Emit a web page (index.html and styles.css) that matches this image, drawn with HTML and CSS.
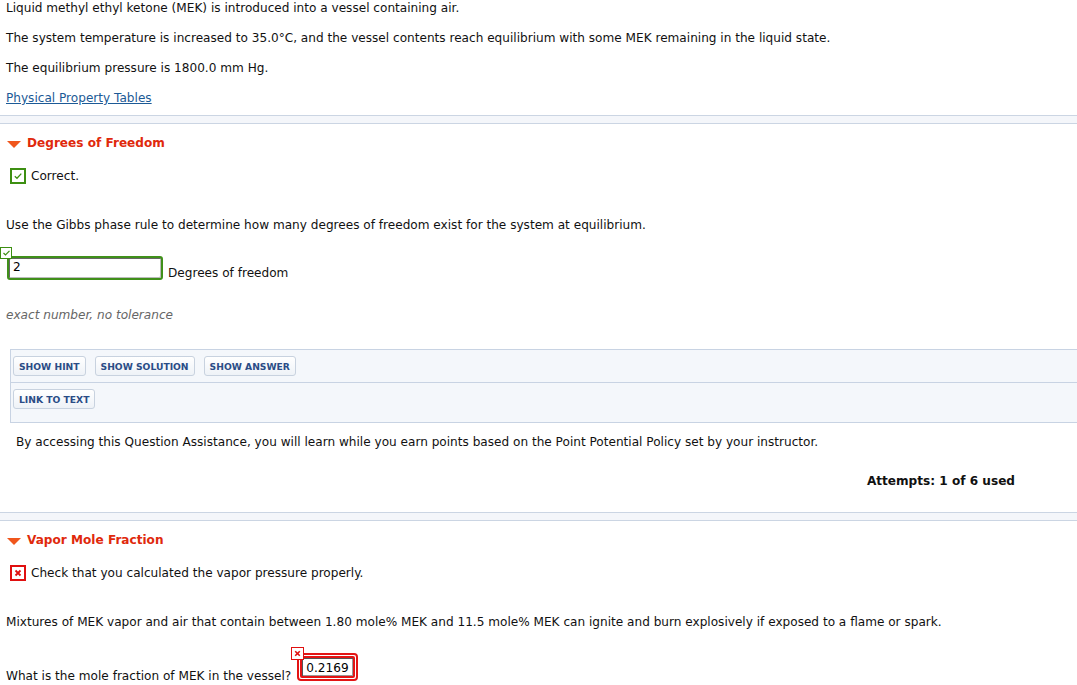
FILE: index.html
```html
<!DOCTYPE html>
<html>
<head>
<meta charset="utf-8">
<link rel="stylesheet" href="styles.css">
</head>
<body>
<div class="page">
  <p class="line">Liquid methyl ethyl ketone (MEK) is introduced into a vessel containing air.</p>
  <p class="line">The system temperature is increased to 35.0°C, and the vessel contents reach equilibrium with some MEK remaining in the liquid state.</p>
  <p class="line">The equilibrium pressure is 1800.0 mm Hg.</p>
  <p class="line"><a class="link" href="#">Physical Property Tables</a></p>

  <div class="sep sep1"></div>

  <div class="part-head"><span class="tri"></span>Degrees of Freedom</div>
  <div class="feedback fb1">
    <span class="fbox ok"><svg width="10" height="10" viewBox="0 0 10 10"><path d="M1.8 5.2 L4 7.3 L8.3 2.6" fill="none" stroke="#3d8f12" stroke-width="1.3"/></svg></span>
    <span>Correct.</span>
  </div>

  <p class="line q1">Use the Gibbs phase rule to determine how many degrees of freedom exist for the system at equilibrium.</p>

  <div class="answer-row a1">
    <span class="input-wrap">
      <span class="badge ok"><svg width="9" height="8" viewBox="0 0 9 8"><path d="M1.5 4 L3.5 6 L7.5 1.8" fill="none" stroke="#3d8f12" stroke-width="1.2"/></svg></span>
      <span class="input green">2</span>
    </span>
    <span class="unit">Degrees of freedom</span>
  </div>

  <p class="line note">exact number, no tolerance</p>

  <div class="assist">
    <div class="assist-row r1">
      <span class="btn">SHOW HINT</span>
      <span class="btn">SHOW SOLUTION</span>
      <span class="btn">SHOW ANSWER</span>
    </div>
    <div class="assist-row r2">
      <span class="btn">LINK TO TEXT</span>
    </div>
  </div>

  <p class="line policy">By accessing this Question Assistance, you will learn while you earn points based on the Point Potential Policy set by your instructor.</p>

  <div class="attempts">Attempts: 1 of 6 used</div>

  <div class="sep sep2"></div>

  <div class="part-head"><span class="tri"></span>Vapor Mole Fraction</div>
  <div class="feedback fb1">
    <span class="fbox bad"><svg width="10" height="10" viewBox="0 0 10 10"><path d="M2.5 2.5 L7.5 7.5 M7.5 2.5 L2.5 7.5" fill="none" stroke="#e01010" stroke-width="1.8"/></svg></span>
    <span>Check that you calculated the vapor pressure properly.</span>
  </div>

  <p class="line q2">Mixtures of MEK vapor and air that contain between 1.80 mole% MEK and 11.5 mole% MEK can ignite and burn explosively if exposed to a flame or spark.</p>

  <div class="answer-row a2">
    <span class="qtext">What is the mole fraction of MEK in the vessel?</span>
    <span class="input-wrap">
      <span class="badge bad"><svg width="9" height="9" viewBox="0 0 9 9"><path d="M2.2 2.2 L6.8 6.8 M6.8 2.2 L2.2 6.8" fill="none" stroke="#e01010" stroke-width="1.6"/></svg></span>
      <span class="red-outer"><span class="input red">0.2169</span></span>
    </span>
  </div>
</div>
</body>
</html>
```

FILE: styles.css
```css
html, body {
  margin: 0;
  padding: 0;
  background: #fff;
  overflow: hidden;
}
body {
  font-family: "DejaVu Sans", Verdana, sans-serif;
  font-size: 12.1px;
  color: #111;
}
.page {
  width: 1077px;
}
.line {
  margin: 0 0 14px 6px;
  line-height: 16px;
  white-space: nowrap;
}
.link {
  color: #1c5a96;
  text-decoration: underline;
}
.sep {
  height: 7px;
  border-top: 1px solid #cbd5e3;
  border-bottom: 1px solid #cbd5e3;
  background: #f4f6fa;
}
.sep1 { margin-top: -5px; }
.part-head {
  margin: 11px 0 0 7px;
  line-height: 16px;
  color: #e0290c;
  font-weight: bold;
  display: flex;
  align-items: center;
}
.tri {
  width: 0;
  height: 0;
  border-left: 7px solid transparent;
  border-right: 7px solid transparent;
  border-top: 7px solid #f0561c;
  margin-right: 6px;
  margin-top: 2px;
}
.feedback {
  display: flex;
  align-items: center;
  margin: 17px 0 0 10px;
  line-height: 16px;
}
.fbox {
  box-sizing: border-box;
  width: 16px;
  height: 16px;
  display: inline-flex;
  align-items: center;
  justify-content: center;
  background: #fff;
  margin-right: 5px;
}
.fbox.ok { border: 2px solid #3d8f12; }
.fbox.bad { border: 2px solid #e01010; }
.q1 { margin-top: 33px; }
.answer-row {
  display: flex;
  align-items: flex-end;
}
.a1 {
  margin: -6px 0 0 0;
  height: 39px;
}
.input-wrap {
  position: relative;
  display: inline-block;
}
.a1 .input-wrap { margin-left: 7px; }
.badge {
  position: absolute;
  box-sizing: border-box;
  display: flex;
  align-items: center;
  justify-content: center;
  background: #fff;
  z-index: 2;
}
.badge.ok {
  left: -7px;
  top: -9px;
  width: 12px;
  height: 12px;
  border: 1px solid #3d8f12;
}
.badge.bad {
  left: -6px;
  top: -6px;
  width: 13px;
  height: 13px;
  border: 1px solid #e01010;
}
.input {
  box-sizing: border-box;
  display: inline-block;
  background: #fff;
  line-height: 16px;
  color: #000;
}
.input.green {
  width: 156px;
  height: 24px;
  border: 2px solid #40901a;
  border-radius: 3px;
  box-shadow: inset 1px 1px 0 #666, inset -1px -1px 0 #bbb;
  padding: 1px 0 0 4px;
}
.unit {
  margin-left: 5px;
  line-height: 16px;
  margin-bottom: -1px;
}
.note {
  margin-top: 27px;
  margin-bottom: 26px;
  color: #666;
  font-style: italic;
}
.assist {
  margin: 26px 0 0 10px;
  border: 1px solid #c8d3e3;
  border-right: none;
  background: #f4f7fb;
}
.assist-row {
  display: flex;
  gap: 9px;
  padding-left: 2px;
}
.r1 {
  height: 33px;
  padding-top: 6px;
  box-sizing: border-box;
  border-bottom: 1px solid #c8d3e3;
}
.r2 {
  height: 39px;
  padding-top: 6px;
  box-sizing: border-box;
}
.btn {
  box-sizing: border-box;
  height: 20px;
  padding: 0 5px;
  display: inline-flex;
  align-items: center;
  border: 1px solid #c8d2df;
  border-radius: 3px;
  background: linear-gradient(#ffffff, #eef2f7);
  color: #2a4c86;
  font-weight: bold;
  font-size: 9.2px;
  letter-spacing: 0;
}
.policy {
  margin: 11px 0 0 16px;
}
.attempts {
  margin-top: 23px;
  text-align: right;
  padding-right: 62px;
  font-weight: bold;
  line-height: 16px;
}
.sep2 { margin-top: 23px; }
.q2 { margin-top: 33px; }
.a2 {
  margin-top: -6px;
  height: 48px;
  align-items: flex-end;
  margin-left: 6px;
}
.qtext {
  line-height: 16px;
  margin-bottom: 2px;
}
.a2 .input-wrap {
  margin-left: 6px;
  margin-bottom: 5px;
}
.red-outer {
  display: inline-block;
  border: 2px solid #e31414;
  border-radius: 4px;
  padding: 1px;
  background: #fff;
}
.input.red {
  height: 22px;
  width: 55px;
  border: 2px solid #e31414;
  box-shadow: inset 1px 1px 0 #555, inset -1px -1px 0 #999;
  padding: 2px 0 0 4px;
  border-radius: 2px;
}
```
